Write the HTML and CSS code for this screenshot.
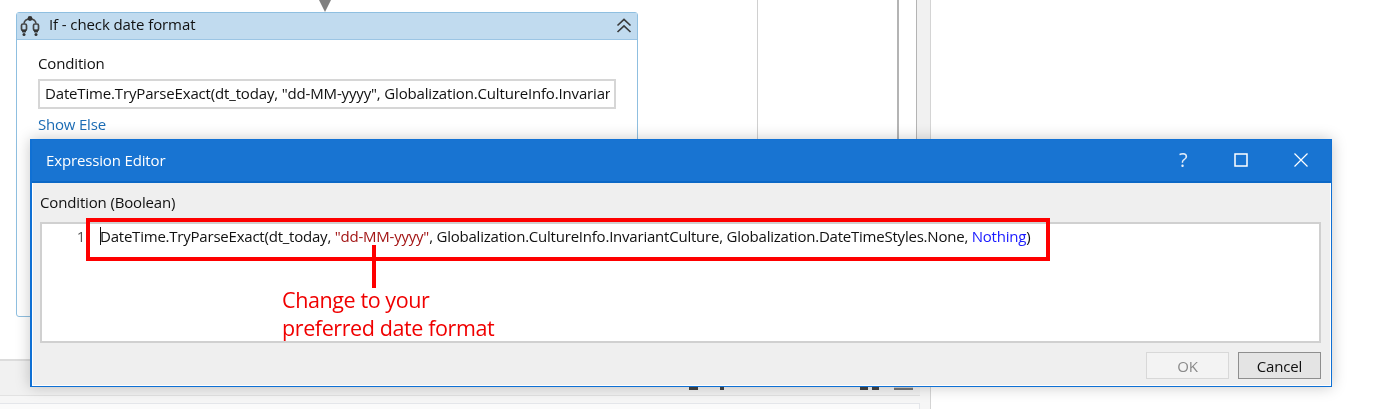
FILE: index.html
```html
<!DOCTYPE html>
<html lang="en">
<head>
<meta charset="utf-8">
<title>Expression Editor</title>
<link rel="stylesheet" href="styles.css">
</head>
<body>
<div class="app">
  <div class="main">
    <div class="upper">
      <div class="designer">
        <div class="connector"></div>
        <section class="activity">
          <header class="activity-head">
            <svg class="if-icon" width="24" height="24" viewBox="0 0 24 24"><g fill="none" stroke="#444" stroke-width="1.700"><path d="M6 9.500C6.500 6 9 5 12 5s5.500 1 6 4.500"/><rect x="3.500" y="10" width="5" height="6.500" rx="1.500"/><rect x="15.500" y="10" width="5" height="6.500" rx="1.500"/></g><g fill="#333"><circle cx="12" cy="4.500" r="2.400"/><path d="M3.500 15.500h5l-.8 3h-3.400zM15.500 15.500h5l-.8 3h-3.400z"/><circle cx="6" cy="20.500" r="1.500"/><circle cx="18" cy="20.500" r="1.500"/></g></svg>
            <span class="activity-title">If - check date format</span>
            <svg class="collapse" width="16" height="16" viewBox="0 0 16 16"><path d="M1.500 7.500 8 1.500l6.500 6M1.500 14 8 8l6.500 6" fill="none" stroke="#3a3a3a" stroke-width="1.700"/></svg>
          </header>
          <div class="activity-body">
            <div class="field-label">Condition</div>
            <div class="field-input"><span class="field-text">DateTime.TryParseExact(dt_today, "dd-MM-yyyy", Globalization.CultureInfo.InvariantCulture</span></div>
            <a class="show-else">Show Else</a>
          </div>
        </section>
      </div>
      <div class="column-a"></div>
      <div class="column-b"></div>
      <div class="column-c"></div>
    </div>
    <div class="lower">
      <div class="toolbar">
        <span class="tool tool-a"></span><span class="tool tool-b"></span>
        <span class="tool tool-c"></span><span class="tool tool-e"></span><span class="tool tool-d"></span>
      </div>
      <div class="strip"></div>
    </div>
  </div>
  <div class="side"></div>
</div>

<div class="dialog">
  <div class="dialog-title">
    <span class="dialog-name">Expression Editor</span>
    <div class="window-controls">
      <span class="help">?</span>
      <svg width="14" height="14" viewBox="0 0 14 14"><rect x="1" y="1" width="12" height="12" fill="none" stroke="#fff" stroke-width="1.500"/></svg>
      <svg width="14" height="14" viewBox="0 0 14 14"><path d="M.5.500l13 13M13.500.500l-13 13" fill="none" stroke="#fff" stroke-width="1.200"/></svg>
    </div>
  </div>
  <div class="dialog-body">
    <div class="editor-label">Condition (Boolean)</div>
    <div class="editor">
      <div class="line-no">1</div>
      <div class="code"><span class="caret"></span>DateTime.TryParseExact(dt_today, <span class="str">"dd-MM-yyyy"</span>, Globalization.CultureInfo.InvariantCulture, Globalization.DateTimeStyles.None, <span class="kw">Nothing</span>)</div>
    </div>
    <div class="buttons">
      <button class="btn btn-off">OK</button>
      <button class="btn btn-on">Cancel</button>
    </div>
  </div>
</div>

<div class="red-box"></div>
<div class="red-stem"></div>
<div class="red-note">Change to your<br>preferred date format</div>
</body>
</html>
```
FILE: styles.css
```css
* { box-sizing: border-box; }
html, body { margin: 0; height: 409px; overflow: hidden; background: #fff; }
body { font-family: "Open Sans", "Noto Sans", sans-serif; color: #111; position: relative; filter: blur(.35px); }

.app { display: flex; height: 409px; }
.main { width: 931px; display: flex; flex-direction: column; border-right: 1px solid #d4d4d4; }
.upper { display: flex; height: 361px; border-bottom: 2px solid #dcdcdc; }
.designer { width: 758px; border-right: 1px solid #d0d0d0; padding: 12px 120px 0 16px; position: relative; }
.connector { position: absolute; left: 319px; top: 0; width: 0; height: 0; border-left: 6px solid transparent; border-right: 6px solid transparent; border-top: 12px solid #808080; }
.activity { width: 622px; height: 305px; border: 1px solid #8fbfe0; border-radius: 3px; background: #fff; }
.activity-head { height: 27px; background: #c1dbef; border-bottom: 1px solid #9cc5e4; display: flex; align-items: center; padding: 0 5px 0 1px; }
.if-icon { flex: none; }
.activity-title { margin: -5px 0 0 7px; flex: 1; font-size: 15px; letter-spacing: -.1px; }
.activity-body { padding: 13px 21px; }
.field-label { font-size: 15px; letter-spacing: -.15px; line-height: 20px; }
.field-input { margin-top: 6px; width: 578px; height: 30px; border: 2px solid #d6d6d6; background: #fff; padding: 0 5px; overflow: hidden; white-space: nowrap; line-height: 24px; font-size: 15px; letter-spacing: -.16px; }
.field-text { display: block; width: 565px; overflow: hidden; }
.show-else { display: block; margin-top: 5px; font-size: 15px; letter-spacing: -.2px; color: #1b6cb5; }
.column-a { width: 141px; border-right: 2px solid #b4b4b4; }
.column-b { width: 18px; border-right: 1px solid #b4b4b4; }
.column-c { flex: 1; background: #f1f1f1; }

.lower { flex: 1; background: #f6f6f6; display: flex; flex-direction: column; }
.toolbar { height: 35px; background: #f1f1f1; display: flex; align-items: flex-end; padding: 0 0 5px 689px; margin-right: 10px; border-bottom: 1px solid #e2e2e2; }
.tool { display: block; background: #444; height: 5px; }
.tool-a { width: 9px; }
.tool-b { width: 4px; height: 3px; margin-left: 22px; }
.tool-c { width: 8px; margin-left: 136px; }
.tool-e { width: 7px; margin-left: 4px; }
.tool-d { width: 19px; height: 5px; margin-left: 15px; background: #d0d0d0; border-bottom: 2px solid #777; }
.strip { flex: 1; background: #fbfbfb; border-top: 1px solid #e4e6ea; border-right: 1px solid #e4e6ea; margin: 7px 10px 0 0; }
.side { flex: 1; background: #fff; }

.dialog { position: absolute; left: 30px; top: 139px; width: 1302px; height: 248px; border: 1px solid #0f70d4; border-width: 1px 1px 2px 2px; background: #efefef; box-shadow: 0 0 14px rgba(0,0,0,.22); display: flex; flex-direction: column; }
.dialog-title { height: 43px; background: #1874d2; border-bottom: 2px solid #0b68c6; flex: none; display: flex; align-items: center; justify-content: space-between; color: #fff; padding: 0 23px 3px 14px; }
.dialog-name { font-size: 15px; letter-spacing: -.15px; margin-top: 1px; }
.window-controls { display: flex; align-items: center; gap: 46px; margin-top: 1px; }
.help { font-size: 20px; width: 9px; line-height: 20px; color: #e3edf9; }
.dialog-body { flex: 1; padding: 0 9px 6px 7px; border: 1px solid #fff; border-top: 0; display: flex; flex-direction: column; }
.editor-label { height: 39px; font-size: 15px; letter-spacing: -.15px; line-height: 38px; }
.editor { width: 1281px; height: 121px; background: #fff; border: 2px solid #d0d0d0; display: flex; font-size: 15px; letter-spacing: -.22px; }
.line-no { width: 43px; text-align: right; color: #555; line-height: 24px; }
.code { position: relative; margin-left: 15px; line-height: 24px; white-space: nowrap; }
.caret { position: absolute; left: 0; top: 3px; width: 1px; height: 18px; background: #111; }
.str { color: #a31515; }
.kw { color: #1a1aff; }
.buttons { display: flex; justify-content: flex-end; gap: 9px; margin-top: 9px; }
.btn { width: 83px; height: 27px; font: inherit; font-size: 15px; letter-spacing: -.15px; padding: 0; }
.btn-off { background: #f3f3f3; border: 1px solid #d8d8d8; color: #8a8a8a; }
.btn-on { background: #e4e4e4; border: 1px solid #8e8e8e; color: #111; }

.red-box { position: absolute; left: 86px; top: 218px; width: 964px; height: 43px; border: 4px solid #fe0000; }
.red-stem { position: absolute; left: 372px; top: 245px; width: 4px; height: 43px; background: #fe0000; }
.red-note { position: absolute; left: 282px; top: 286px; font-size: 21.5px; line-height: 28px; color: #f00000; letter-spacing: -.4px; white-space: nowrap; }
```
